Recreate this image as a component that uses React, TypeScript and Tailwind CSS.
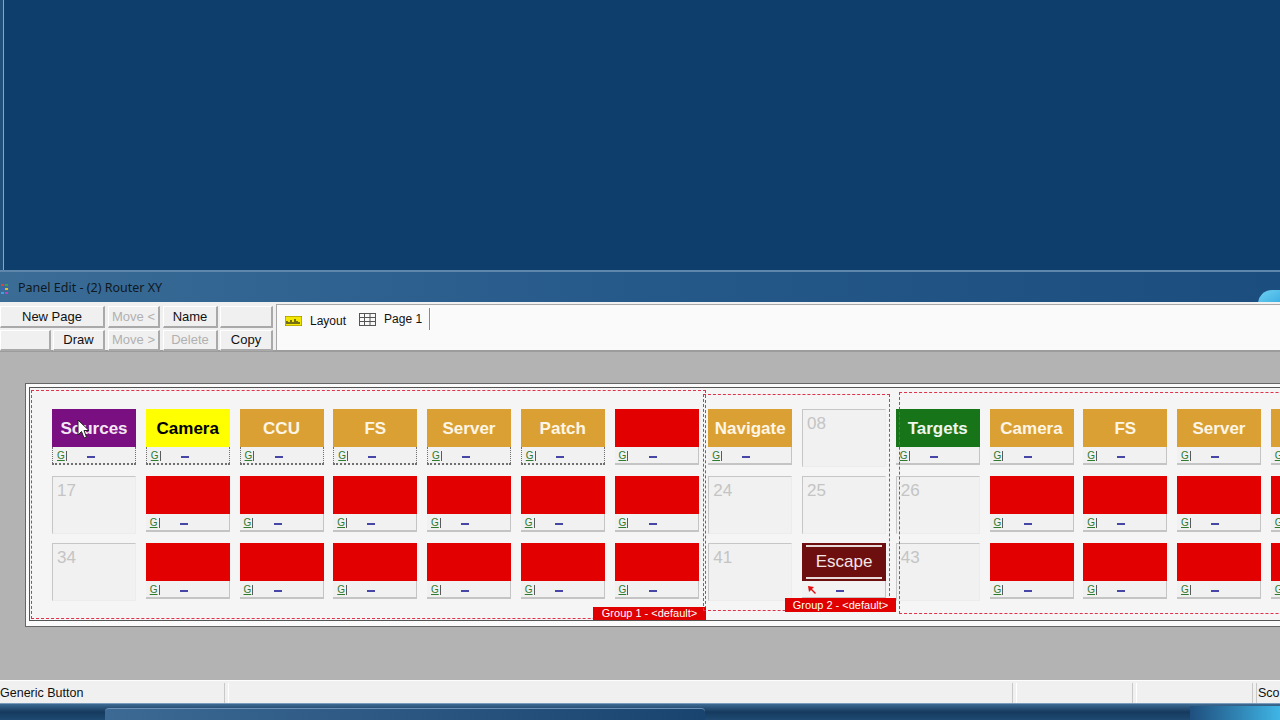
import React from "react";

type Cell =
  | { kind: "label"; text: string; bg: string; fg: string; selected?: boolean; cursor?: boolean }
  | { kind: "red" }
  | { kind: "empty"; num: string }
  | { kind: "escape" };

const GOLD = "bg-[#dba034]";

const row1: Cell[] = [
  { kind: "label", text: "Sources", bg: "bg-[#7a0f82]", fg: "text-[#f4e8f4]", selected: true, cursor: true },
  { kind: "label", text: "Camera", bg: "bg-[#ffff00]", fg: "text-black", selected: true },
  { kind: "label", text: "CCU", bg: GOLD, fg: "text-[#fdf6e6]", selected: true },
  { kind: "label", text: "FS", bg: GOLD, fg: "text-[#fdf6e6]", selected: true },
  { kind: "label", text: "Server", bg: GOLD, fg: "text-[#fdf6e6]", selected: true },
  { kind: "label", text: "Patch", bg: GOLD, fg: "text-[#fdf6e6]", selected: true },
  { kind: "label", text: "", bg: "bg-[#e20000]", fg: "text-white" },
  { kind: "label", text: "Navigate", bg: GOLD, fg: "text-[#fdf6e6]" },
  { kind: "empty", num: "08" },
  { kind: "label", text: "Targets", bg: "bg-[#187418]", fg: "text-[#eef6ee]" },
  { kind: "label", text: "Camera", bg: GOLD, fg: "text-[#fdf6e6]" },
  { kind: "label", text: "FS", bg: GOLD, fg: "text-[#fdf6e6]" },
  { kind: "label", text: "Server", bg: GOLD, fg: "text-[#fdf6e6]" },
  { kind: "label", text: "", bg: GOLD, fg: "text-white" },
];

const red = (n: number): Cell[] => Array.from({ length: n }, () => ({ kind: "red" as const }));

const row2: Cell[] = [{ kind: "empty", num: "17" }, ...red(6), { kind: "empty", num: "24" }, { kind: "empty", num: "25" }, { kind: "empty", num: "26" }, ...red(4)];
const row3: Cell[] = [{ kind: "empty", num: "34" }, ...red(6), { kind: "empty", num: "41" }, { kind: "escape" }, { kind: "empty", num: "43" }, ...red(4)];

function Dash() {
  return <span className="absolute left-[34px] top-[9px] w-[8px] h-[2px] bg-[#4646a6]" />;
}

function Footer({ selected }: { selected?: boolean }) {
  return (
    <div
      className={`relative h-[18px] bg-[#f1f1f1] ${
        selected ? "border-x border-b-2 border-dotted border-[#707070]" : "border-r border-b-2 border-[#c4c4c4]"
      }`}
    >
      <span className="absolute left-[4px] top-[4px] text-[10px] leading-[10px] text-[#2f7a2f] underline border-r border-[#5a5a5a] pr-[1px]">
        G
      </span>
      <Dash />
    </div>
  );
}

function CellView({ c }: { c: Cell }) {
  if (c.kind === "empty") {
    return (
      <div className="shrink-0 h-[58px] w-[84px] border-t border-l border-[#c6c6c6] border-b border-r border-b-[#ececec] border-r-[#ececec] bg-[#f1f1f1]">
        <div className="pl-[4px] pt-[4px] text-[17px] leading-[20px] text-[#c4c4c4]">{c.num}</div>
      </div>
    );
  }
  if (c.kind === "escape") {
    return (
      <div className="shrink-0 h-[58px] w-[84px] relative">
        <div className="h-[38px] bg-[#6d0f0f] flex flex-col justify-between py-[2px] px-[4px]">
          <div className="h-[2px] bg-[#e9dada]" />
          <div className="text-[17px] leading-[20px] text-center text-[#f3e6e6]">Escape</div>
          <div className="h-[2px] bg-[#e9dada]" />
        </div>
        <div className="relative h-[18px] bg-[#f3f3f3] border-r border-b-2 border-[#c4c4c4]">
          <svg className="absolute left-[5px] top-[4px]" width="10" height="10" viewBox="0 0 10 10">
            <path d="M1 1 L7 2 L5 4 L9 8 L8 9 L4 5 L2 7 Z" fill="#e01010" />
          </svg>
          <Dash />
        </div>
      </div>
    );
  }
  const bg = c.kind === "red" ? "bg-[#e20000]" : c.bg;
  return (
    <div className="shrink-0 h-[58px] w-[84px] relative">
      <div className={`h-[38px] ${bg} flex items-center justify-center`}>
        {c.kind === "label" && c.text && (
          <span className={`text-[17px] font-bold leading-none ${c.fg}`}>{c.text}</span>
        )}
      </div>
      <Footer selected={c.kind === "label" && c.selected} />
      {c.kind === "label" && c.cursor && (
        <svg className="absolute left-[25px] top-[10px]" width="13" height="21" viewBox="0 0 13 21">
          <path d="M1 1 L1 16 L4.5 12.5 L7 19 L9.5 18 L7 11.5 L12 11.5 Z" fill="#ffffff" stroke="#222" strokeWidth="1" />
        </svg>
      )}
    </div>
  );
}

function Btn({ w, label, disabled }: { w: string; label?: string; disabled?: boolean }) {
  return (
    <div
      className={`${w} h-full flex items-center justify-center bg-[#f0f0f0] border-t border-l border-white border-b-2 border-r-2 border-b-[#a9a9a9] border-r-[#a9a9a9] text-[13px] ${
        disabled ? "text-[#b0b0b0]" : "text-[#111]"
      }`}
    >
      {label}
    </div>
  );
}

export default function App() {
  return (
    <div className="w-[1280px] h-[720px] overflow-hidden flex flex-col" style={{ fontFamily: '"Liberation Sans", Arial, sans-serif' }}>
      {/* desktop */}
      <div className="h-[272px] flex bg-[#0d3e6c] border-b-2 border-[#5f86ab]">
        <div className="w-[3px] bg-[#21507b]" />
        <div className="w-px bg-[#8aa6c4]" />
        <div className="flex-1" />
      </div>

      {/* title bar */}
      <div className="h-[30px] flex items-center pt-[3px] relative overflow-hidden bg-gradient-to-r from-[#3a6c96] via-[#25598a] to-[#1b4e7e]">
        <svg className="ml-[1px]" width="10" height="12" viewBox="0 0 10 12">
          <rect x="0" y="1" width="3" height="2" fill="#e04040" />
          <rect x="4" y="1" width="3" height="2" fill="#40a040" />
          <rect x="0" y="5" width="3" height="2" fill="#4060d0" />
          <rect x="4" y="5" width="3" height="2" fill="#e0c030" />
          <rect x="0" y="9" width="3" height="2" fill="#40a0e0" />
          <rect x="4" y="9" width="3" height="2" fill="#c040c0" />
        </svg>
        <span className="ml-[7px] text-[12.5px] text-[#101820]" style={{ fontFamily: '"Noto Sans", "Open Sans", sans-serif' }}>
          Panel Edit - (2) Router XY
        </span>
        <div className="absolute right-0 top-[18px] w-[22px] h-[14px] rounded-tl-[14px] bg-gradient-to-br from-[#6fd0f2] to-[#39aee2]" />
      </div>

      {/* toolbar */}
      <div className="h-[50px] flex bg-[#f0f0f0] border-b-2 border-[#9c9c9c]">
        <div className="w-[274px] flex flex-col pt-[4px] gap-[2px]">
          <div className="h-[22px] flex">
            <Btn w="w-[105px]" label="New Page" />
            <div className="w-[3px]" />
            <Btn w="w-[52px]" label="Move <" disabled />
            <div className="w-[3px]" />
            <Btn w="w-[55px]" label="Name" />
            <div className="w-[2px]" />
            <Btn w="w-[53px]" />
          </div>
          <div className="h-[21px] flex">
            <Btn w="w-[51px]" />
            <div className="w-[2px]" />
            <Btn w="w-[52px]" label="Draw" />
            <div className="w-[3px]" />
            <Btn w="w-[52px]" label="Move >" disabled />
            <div className="w-[3px]" />
            <Btn w="w-[55px]" label="Delete" disabled />
            <div className="w-[2px]" />
            <Btn w="w-[53px]" label="Copy" />
          </div>
        </div>
        <div className="ml-[2px] mt-[2px] flex-1 bg-[#fafafa] border-l border-t border-[#a8a8a8]">
          <div className="h-[28px] flex items-center text-[12px] text-[#111]">
            <div className="ml-[8px] flex items-center h-full pt-[3px]">
              <svg width="17" height="10" viewBox="0 0 17 10">
                <rect x="0" y="0" width="17" height="10" fill="#f3e600" stroke="#8a7a00" strokeWidth="1" />
                <path d="M2 8V5M4 8V6M6 8V4M8 8V6M10 8V3M12 8V5M14 8V6" stroke="#222" strokeWidth="1.2" />
              </svg>
              <span className="ml-[8px]">Layout</span>
            </div>
            <div className="ml-[13px] flex items-center h-full">
              <svg width="17" height="13" viewBox="0 0 17 13">
                <rect x="0.5" y="0.5" width="16" height="12" fill="#f8f8f8" stroke="#555" />
                <path d="M1 4.5H16M1 8.5H16M5.5 1V12M11 1V12" stroke="#555" strokeWidth="1" />
              </svg>
              <span className="ml-[8px]">Page 1</span>
            </div>
            <div className="ml-[7px] w-[2px] h-[22px] border-l border-[#888] border-r border-r-white" />
          </div>
        </div>
      </div>

      {/* work area */}
      <div className="flex-1 bg-[#b3b3b3] pt-[31px] pl-[25px] overflow-hidden">
        <div className="w-[1320px] h-[244px] border border-[#666] bg-[#fbfbfb] p-[3px]">
          <div className="relative h-[234px] border border-[#555] bg-[#f5f5f5] pt-[21px] pl-[22px]">
            <div className="flex flex-col gap-[9px]">
              {[row1, row2, row3].map((row, ri) => (
                <div key={ri} className="flex gap-x-[9.75px]">
                  {row.map((c, ci) => (
                    <CellView key={ci} c={c} />
                  ))}
                </div>
              ))}
            </div>

            {/* groups */}
            <div className="absolute left-[1px] top-[2px] w-[675px] h-[229px] border border-dashed border-[#e0304a]" />
            <div className="absolute left-[563px] top-[219px] w-[113px] h-[13px] bg-[#e00000] text-white text-[11px] leading-[13px] text-center">
              Group 1 - &lt;default&gt;
            </div>
            <div className="absolute left-[673px] top-[6px] w-[187px] h-[217px] border border-dashed border-[#e0304a]" />
            <div className="absolute left-[755px] top-[210px] w-[111px] h-[14px] bg-[#e00000] text-white text-[11px] leading-[14px] text-center">
              Group 2 - &lt;default&gt;
            </div>
            <div className="absolute left-[869px] top-[4px] w-[500px] h-[222px] border border-dashed border-[#e0304a]" />
          </div>
        </div>
      </div>

      {/* status bar */}
      <div className="h-[23px] flex items-stretch bg-[#f0f0f0] border-t border-[#fdfdfd] text-[12.5px] text-[#111] pt-[2px] gap-[3px]">
        <div className="w-[225px] flex items-center border-r border-[#c8c8c8]">Generic Button</div>
        <div className="w-[785px] border-r border-[#c8c8c8] border-l border-l-white" />
        <div className="w-[117px] border-r border-[#c8c8c8] border-l border-l-white" />
        <div className="w-[117px] border-r border-[#c8c8c8] border-l border-l-white" />
        <div className="flex-1 flex items-center pl-[1px] border-l border-[#c8c8c8]">Sco</div>
      </div>

      {/* taskbar */}
      <div className="h-[17px] relative bg-gradient-to-b from-[#3d6a92] via-[#163a5e] to-[#1f4a72] border-t border-[#7a9cbc]">
        <div className="absolute left-[105px] top-[4px] w-[600px] h-[14px] rounded-t-[4px] bg-gradient-to-r from-[#3c6a94] to-[#1a4470] border-t border-[#6d92b6]" />
        <div className="absolute right-0 top-[2px] w-[90px] h-[15px] bg-gradient-to-r from-[#1f4f7e] to-[#3fb6e6]" />
      </div>
    </div>
  );
}
